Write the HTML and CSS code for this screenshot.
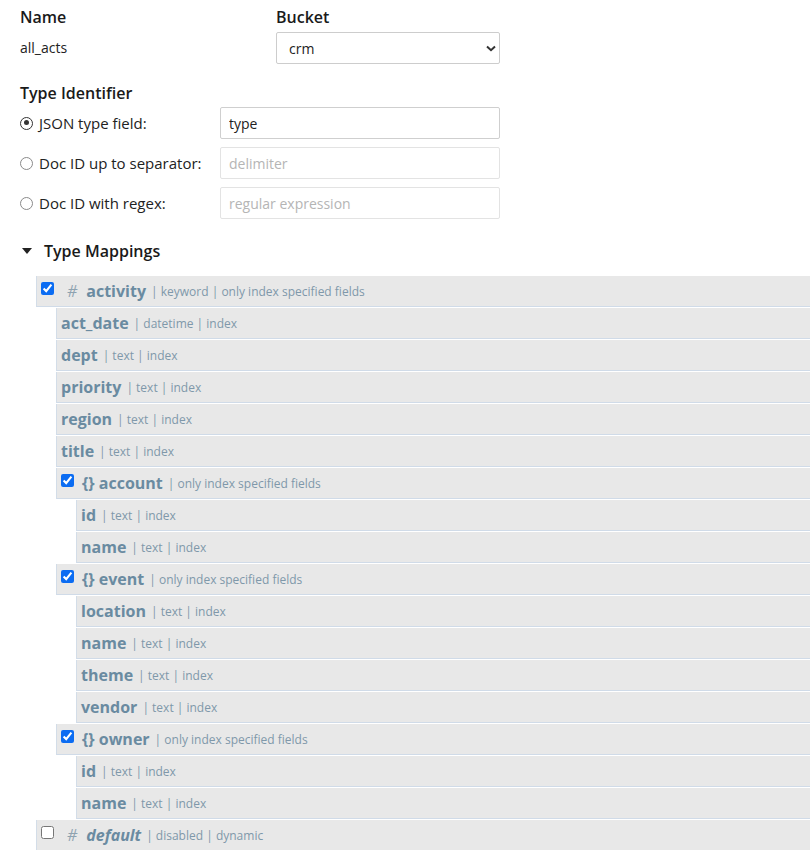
FILE: index.html
```html
<!DOCTYPE html>
<html>
<head>
<meta charset="utf-8">
<link rel="stylesheet" href="styles.css">
</head>
<body>
<div class="page">
  <div class="top">
    <div class="col name-col">
      <div class="heading">Name</div>
      <div class="value">all_acts</div>
    </div>
    <div class="col bucket-col">
      <div class="heading">Bucket</div>
      <div class="select-wrap">
        <select class="select"><option>crm</option></select>
        <svg class="chev" width="10" height="7" viewBox="0 0 10 7"><path d="M1 1.5 L5 5.2 L9 1.5" fill="none" stroke="#333" stroke-width="2"/></svg>
      </div>
    </div>
  </div>

  <div class="heading ti">Type Identifier</div>
  <div class="radios">
    <label class="radio-row"><span class="radio checked"></span><span class="rlabel">JSON type field:</span></label>
    <input class="field" type="text" value="type">
    <label class="radio-row"><span class="radio"></span><span class="rlabel">Doc ID up to separator:</span></label>
    <input class="field dis" type="text" placeholder="delimiter">
    <label class="radio-row"><span class="radio"></span><span class="rlabel">Doc ID with regex:</span></label>
    <input class="field dis" type="text" placeholder="regular expression">
  </div>

  <div class="heading tm"><span class="tri"></span>Type Mappings</div>

  <div class="tree">
    <div class="row"><input type="checkbox" class="cb" checked><span class="hash">#</span><span class="nm">activity</span><span class="meta">| keyword | only index specified fields</span></div>
    <div class="children">
      <div class="row"><span class="nm">act_date</span><span class="meta">| datetime | index</span></div>
      <div class="row"><span class="nm">dept</span><span class="meta">| text | index</span></div>
      <div class="row"><span class="nm">priority</span><span class="meta">| text | index</span></div>
      <div class="row"><span class="nm">region</span><span class="meta">| text | index</span></div>
      <div class="row"><span class="nm">title</span><span class="meta">| text | index</span></div>
      <div class="row"><input type="checkbox" class="cb" checked><span class="nm obj">{} account</span><span class="meta">| only index specified fields</span></div>
      <div class="children">
        <div class="row"><span class="nm">id</span><span class="meta">| text | index</span></div>
        <div class="row"><span class="nm">name</span><span class="meta">| text | index</span></div>
      </div>
      <div class="row"><input type="checkbox" class="cb" checked><span class="nm obj">{} event</span><span class="meta">| only index specified fields</span></div>
      <div class="children">
        <div class="row"><span class="nm">location</span><span class="meta">| text | index</span></div>
        <div class="row"><span class="nm">name</span><span class="meta">| text | index</span></div>
        <div class="row"><span class="nm">theme</span><span class="meta">| text | index</span></div>
        <div class="row"><span class="nm">vendor</span><span class="meta">| text | index</span></div>
      </div>
      <div class="row"><input type="checkbox" class="cb" checked><span class="nm obj">{} owner</span><span class="meta">| only index specified fields</span></div>
      <div class="children">
        <div class="row"><span class="nm">id</span><span class="meta">| text | index</span></div>
        <div class="row"><span class="nm">name</span><span class="meta">| text | index</span></div>
      </div>
    </div>
    <div class="row"><input type="checkbox" class="cb"><span class="hash">#</span><span class="nm ital">default</span><span class="meta">| disabled | dynamic</span></div>
  </div>
</div>
</body>
</html>
```

FILE: styles.css
```css
* { box-sizing: border-box; }
html, body { margin: 0; padding: 0; background: #fff; }
body {
  font-family: "Open Sans", "Noto Sans", sans-serif;
  font-size: 14px;
  color: #222;
  overflow: hidden;
}
.page { padding: 6px 0 0 20px; }

.heading {
  font-size: 16px;
  font-weight: 600;
  line-height: 22px;
  color: #1a1a1a;
}

.top { display: flex; }
.name-col { width: 256px; }
.bucket-col { width: 224px; }
.value { margin-top: 4px; height: 32px; line-height: 32px; font-size: 14px; }

.select-wrap { position: relative; margin-top: 4px; width: 224px; height: 32px; }
.select {
  -webkit-appearance: none;
  appearance: none;
  width: 100%;
  height: 32px;
  border: 1px solid #cdcdcd;
  border-radius: 2px;
  background: #fff;
  font-family: inherit;
  font-size: 14px;
  color: #222;
  padding: 0 12px;
}
.chev { position: absolute; right: 4px; top: 13px; pointer-events: none; }

.ti { margin-top: 18px; margin-bottom: 3px; }

.radios {
  display: grid;
  grid-template-columns: 200px 280px;
  row-gap: 8px;
}
.radio-row { display: flex; align-items: center; height: 32px; }
.radio {
  width: 13px; height: 13px;
  border-radius: 50%;
  border: 1px solid #8a8a8a;
  margin-right: 6px;
  position: relative;
  flex: none;
}
.radio.checked { border: 1.5px solid #333; }
.radio.checked::after {
  content: "";
  position: absolute;
  left: 2.5px; top: 2.5px;
  width: 5px; height: 5px;
  border-radius: 50%;
  background: #333;
}
.rlabel { font-size: 15px; color: #222; }

.field {
  height: 32px;
  width: 280px;
  border: 1px solid #cfcfcf;
  border-radius: 2px;
  padding: 0 8px;
  font-family: inherit;
  font-size: 14px;
  color: #222;
  outline: none;
}
.field.dis { border-color: #e3e3e3; }
.field::placeholder { color: #b5b5b5; }

.tm { margin-top: 21px; display: flex; align-items: center; }
.tri {
  width: 0; height: 0;
  border-left: 5.5px solid transparent;
  border-right: 5.5px solid transparent;
  border-top: 6px solid #222;
  margin: 0 12px 0 2px;
}

.tree { margin-top: 14px; margin-left: 16px; }
.children { margin-left: 20px; }
.row {
  height: 31px;
  background: #e8e8e8;
  border-left: 1px solid #d3dde8;
  border-bottom: 1px solid #d0dbe8;
  margin-bottom: 1px;
  display: flex;
  align-items: center;
  padding-left: 4px;
  white-space: nowrap;
  color: #6a8ba1;
}
.cb {
  width: 13px; height: 13px;
  margin: -5px 0 0 0;
  accent-color: #0b6cf2;
  flex: none;
}
.hash {
  font-size: 16px;
  color: #8ea2b0;
  margin-left: 13px;
  margin-right: 9px;
  font-style: italic;
}
.nm {
  font-size: 16px;
  font-weight: 700;
  color: #6a8ba1;
}
.cb + .nm { margin-left: 8px; }
.nm.ital { font-style: italic; }
.meta {
  font-size: 12px;
  color: #7f98aa;
  margin-left: 5px;
}
```
